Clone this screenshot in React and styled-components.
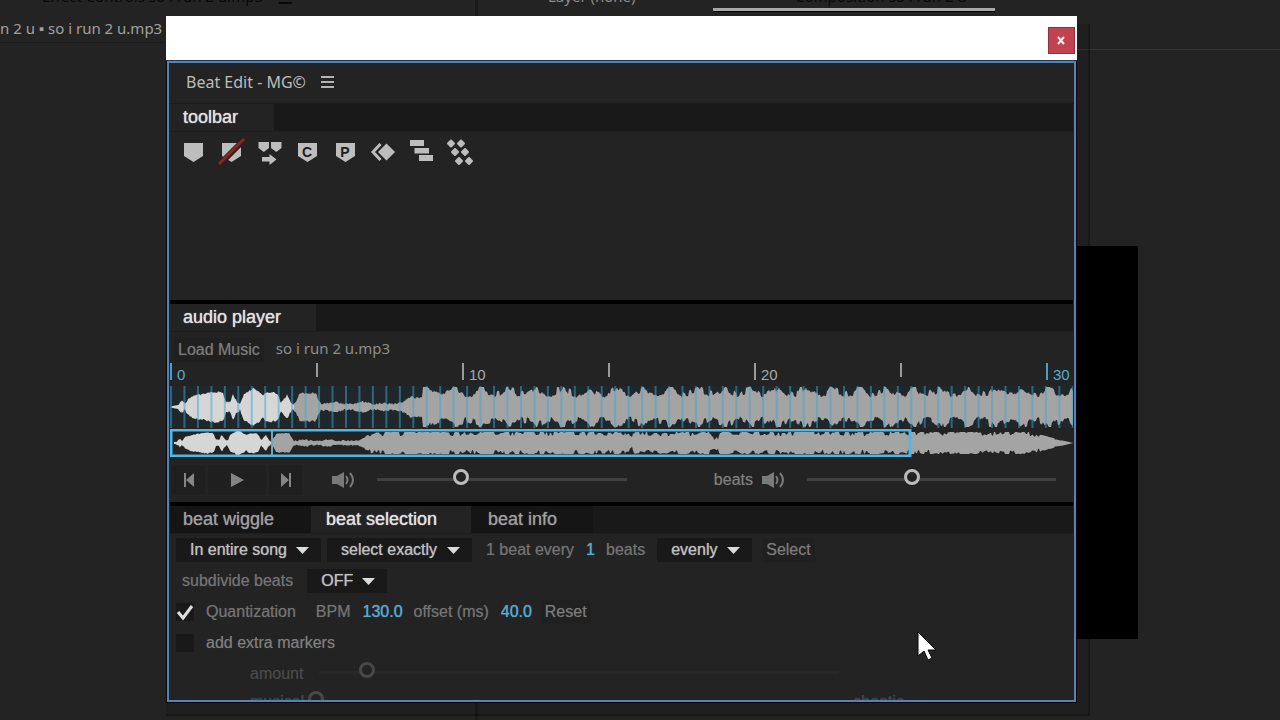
import React from "react";
import styled, { createGlobalStyle, css } from "styled-components";

const sans = `"Liberation Sans", Arial, sans-serif`;
const humanist = `"Noto Sans", "Open Sans", sans-serif`;

const Global = createGlobalStyle`
  * { box-sizing: border-box; }
  body { margin: 0; background: #232323; color: #808080; font: 16px/20px ${sans}; }
  button, input, select { font: inherit; color: inherit; margin: 0; }
`;

/* ---------- host application behind the panel ---------- */

const Desktop = styled.main`
  position: relative;
  min-height: 100vh;
  display: flex;
  flex-direction: column;
  overflow: hidden;
`;

const HostColumns = styled.div`
  flex: 1;
  display: grid;
  grid-template-columns: 478fr 802fr;
`;

const HostPanel = styled.section`
  display: flex;
  flex-direction: column;
  border-right: ${(p) => (p.$divider ? "3px solid #1a1a1a" : "0")};
`;

const HostTabs = styled.div`
  display: flex;
  justify-content: space-between;
  height: 12px;
  overflow: hidden;
  padding: 0 ${(p) => p.$end}px 0 ${(p) => p.$start}px;
  font: 15px/20px ${humanist};
`;

const HostTab = styled.div`
  display: flex;
  align-items: flex-end;
  gap: 16px;
  height: 11px;
  padding: 0 0 5px;
  color: ${(p) => (p.$dim ? "#080808" : "#8c8c8c")};
  white-space: nowrap;
  > svg { margin-bottom: 2px; }
  ${(p) =>
    p.$active &&
    css`
      width: 282px;
      padding: 0 0 2px 82px;
      border-bottom: 3px solid #a8a8a8;
      box-shadow: 0 1px 0 #000;
    `}
`;

const SourcePath = styled.div`
  height: 31px;
  border-bottom: 1px solid #1b1b1b;
  padding-top: 6px;
  font: 15px/20px ${humanist};
  color: #a0a0a0;
  white-space: nowrap;
`;

const MonitorRule = styled.div`
  height: 38px;
  border-bottom: 1px solid #343434;
`;

const Monitor = styled.div`
  width: 65%;
  max-width: 518px;
  aspect-ratio: 518 / 393;
  margin: 196px auto 0;
  background: #000;
`;

/* ---------- floating window ---------- */

const Window = styled.section`
  position: absolute;
  z-index: 1;
  inset: 16px 203px 17px 166px;
  display: flex;
  flex-direction: column;
  background: #05060c;

  &::after {
    content: "";
    position: absolute;
    z-index: -1;
    inset: 8px -13px -13px 0;
    background: rgba(0, 0, 0, 0.1);
    border: solid rgba(0, 0, 0, 0.25);
    border-width: 0 2px 2px 0;
  }
`;

const TitleBar = styled.header`
  flex: none;
  height: 45px;
  display: flex;
  justify-content: flex-end;
  padding: 11px 2px 0;
  background: #fff;
  border-bottom: 1px solid #1f3550;
`;

const CloseButton = styled.button`
  width: 27px;
  height: 27px;
  padding: 0;
  display: grid;
  place-items: center;
  background: #c0434f;
  border: 1px solid #93303f;
`;

const Body = styled.div`
  flex: 1;
  min-height: 0;
  overflow: hidden;
  margin: 0 1px 1px;
  border: 2px solid #5583b4;
  background: #232323;
`;

const PanelHeader = styled.div`
  display: flex;
  align-items: center;
  gap: 15px;
  height: 41px;
  padding: 0 17px 2px;
  border-bottom: 1px solid #1b1b1b;
  font: 16px/20px ${humanist};
  color: #bcbcbc;
`;

const MenuButton = styled.button`
  padding: 0;
  border: 0;
  background: none;
  display: flex;
`;

const Section = styled.section`
  margin: 0 1px;
  border-top: ${(p) => (p.$first ? "0" : "4px solid #000")};
`;

const TabBar = styled.div`
  display: flex;
  height: 28px;
  background: #191919;
  border-bottom: 1px solid #1e1e1e;
`;

const Tab = styled.button`
  width: ${(p) => p.$width}px;
  padding: 0 0 1px ${(p) => p.$indent || 13}px;
  border: 0;
  text-align: left;
  font-size: 18px;
  line-height: 20px;
  background: ${(p) => (p.$active ? "#232323" : "#151515")};
  color: ${(p) => (p.$active ? "#e2e2e2" : "#a0a0a0")};
  text-shadow: 0 0 1px ${(p) => (p.$active ? "#e2e2e2" : "#808080")};
`;

const ToolRow = styled.div`
  display: flex;
  align-items: flex-start;
  gap: 10px;
  height: 168px;
  padding: 6px 10px;
`;

const ToolButton = styled.button`
  width: 28px;
  height: 28px;
  padding: 0;
  border: 0;
  background: none;
  svg { display: block; overflow: visible; }
`;

/* ---------- audio player ---------- */

const LoadRow = styled.div`
  display: flex;
  align-items: center;
  gap: 12px;
  height: 31px;
  padding: 4px 4px 0;
`;

const PlainButton = styled.button`
  padding: 0 4px;
  height: 24px;
  border: 0;
  background: #202020;
  color: #7c7c7c;
  text-shadow: 0 0 1px #505050;
`;

const FileName = styled.span`
  padding-bottom: 4px;
  font: 15px/20px ${humanist};
  color: #8c8c8c;
`;

const Ruler = styled.div`
  display: grid;
  grid-template-columns: repeat(6, minmax(0, 146fr)) minmax(0, 27fr);
  height: 23px;
`;

const RulerCell = styled.div`
  height: ${(p) => (p.$label ? 17 : 14)}px;
  padding: 2px 0 0 5px;
  border-left: 2px solid ${(p) => (p.$accent ? "#4a9fc6" : "#9a9a9a")};
  color: ${(p) => (p.$accent ? "#57acd2" : "#a8a8a8")};
  font-size: 15px;
`;

const WaveView = styled.svg`
  display: block;
  width: 100%;
  height: ${(p) => p.$height}px;
  margin-bottom: 1px;
`;

const Transport = styled.div`
  display: flex;
  align-items: center;
  height: 44px;
  padding: 0 17px 0 2px;
`;

const TransportButton = styled.button`
  width: ${(p) => (p.$wide ? 58 : 33)}px;
  height: 30px;
  margin-right: 3px;
  padding: 0;
  border: 0;
  display: grid;
  place-items: center;
  background: #1f1f1f;
`;

const Volume = styled.label`
  display: flex;
  align-items: center;
  gap: 8px;
  margin-left: ${(p) => (p.$push ? "auto" : "26px")};
`;

const Slider = styled.input.attrs({ type: "range" })`
  appearance: none;
  width: ${(p) => p.$width}px;
  height: 20px;
  margin: 0 0 2px ${(p) => p.$gap}px;
  background: none;
  &::-webkit-slider-runnable-track {
    height: 3px;
    background: ${(p) => (p.$dim ? "#282828" : "#404040")};
  }
  &::-webkit-slider-thumb {
    appearance: none;
    width: 16px;
    height: 16px;
    margin-top: -9px;
    border-radius: 50%;
    border: 3px solid ${(p) => (p.$dim ? "#484848" : "#bcbcbc")};
    background: #232323;
  }
`;

/* ---------- beat selection form ---------- */

const FormRow = styled.div`
  display: flex;
  align-items: center;
  height: ${(p) => (p.$tight ? 26 : 31)}px;
  padding-left: ${(p) => p.$indent || 6}px;
  white-space: nowrap;
`;

const Caption = styled.label`
  margin: 0 ${(p) => p.$after || 0}px 0 ${(p) => p.$before || 0}px;
  color: ${(p) => (p.$dim ? "#4a4a4a" : p.$soft ? "#747474" : "#808080")};
  text-shadow: 0 0 1px ${(p) => (p.$dim ? "#333" : "#505050")};
`;

const FarCaption = styled(Caption)`
  color: #2f4855;
`;

const PickWrap = styled.span`
  display: inline-grid;
  align-items: center;
  margin-right: ${(p) => p.$after || 0}px;
  > * { grid-area: 1 / 1; }
  > svg { justify-self: end; margin-right: 12px; pointer-events: none; }
`;

const PickSelect = styled.select`
  appearance: none;
  height: 24px;
  padding: 1px 34px 0 14px;
  border: 0;
  border-radius: 0;
  background: #191919;
  color: #c0c0c0;
  text-shadow: 0 0 1px #a0a0a0;
`;

const HotNumber = styled.input`
  width: ${(p) => p.$width}px;
  height: 24px;
  padding: 0;
  border: 0;
  background: none;
  color: #58a9cb;
  text-shadow: 0 0 1px #58a9cb;
`;

const Check = styled.input.attrs({ type: "checkbox" })`
  appearance: none;
  width: 18px;
  height: 18px;
  background: #191919;
`;

const CheckWrap = styled.span`
  display: inline-grid;
  margin-right: 12px;
  > * { grid-area: 1 / 1; }
  > svg { pointer-events: none; }
`;

const Pointer = styled.svg`
  position: absolute;
  z-index: 2;
  left: 916px;
  top: 630px;
`;

/* ---------- drawing data ---------- */

const SPAN = 903;

const intro = [
  [0, 0], [3, 1], [8, 2], [12, 6], [15, 3], [19, 9], [26, 12], [34, 13], [40, 15], [46, 15],
  [53, 14], [56, 5], [60, 5], [63, 13], [66, 7], [70, 3], [74, 13], [78, 15], [83, 19], [90, 14],
  [93, 11], [97, 15], [106, 14], [108, 12], [111, 4], [117, 12], [120, 6], [123, 2], [126, 6], [130, 14],
  [146, 14], [148, 8], [151, 3], [158, 4], [166, 5], [174, 3], [183, 3], [190, 5], [196, 5], [201, 3],
  [209, 3], [214, 4], [220, 3], [231, 4], [236, 7], [241, 11], [245, 9], [253, 10],
];

const noise = (n) => {
  const v = Math.sin(n * 127.1 + 11.7) * 43758.5453;
  return v - Math.floor(v);
};

function level(x, side) {
  if (x < 253) {
    let i = 1;
    while (i < intro.length - 1 && intro[i][0] < x) i += 1;
    const [x0, a0] = intro[i - 1];
    const [x1, a1] = intro[i];
    const base = a0 + ((x - x0) / (x1 - x0)) * (a1 - a0);
    return Math.max(0, base + (base > 2 ? (noise(x + side * 500) - 0.5) * 2 : 0));
  }
  const phase = ((x - 258) % 27) / 27;
  const near = Math.min(phase, 1 - phase) * 2;
  const swell = Math.pow(1 - near, 2) * 8;
  const spike = Math.pow(noise(Math.floor(x / 3) + side * 900), 2) * 7;
  return Math.min(20, 9 + swell + spike + noise(x) * 2);
}

function outline(from, to, mid, fn, step = 1) {
  const upper = [];
  const lower = [];
  for (let x = from; x <= to; x += step) {
    upper.push(`${x},${(mid - fn(x, 0)).toFixed(1)}`);
    lower.unshift(`${x},${(mid + fn(x, 1)).toFixed(1)}`);
  }
  return [...upper, ...lower].join(" ");
}

const overview = (x, side) => {
  const source = x / 0.82;
  const fade = x > 860 ? Math.max(0, (SPAN - x) / 43) : 1;
  if (source < 245) return level(source, side) * 0.68;
  const dip = Math.abs(x - 459) < 4 || Math.abs(x - 545) < 4 ? 4 : 0;
  const block = noise(Math.floor(x / 5) + 40) > 0.5 ? 3 : 0;
  return Math.min(11, 7 + block + noise(Math.floor(x / 2) + side * 300) * 4 - dip) * fade;
};

const beats = Array.from({ length: 68 }, (_, i) => 1 + i * 13.46);

/* ---------- icons ---------- */

const Marker = () => <path d="M4 5h19v13l-9.500 6L4 18z" fill="#bdbdbd" />;

const LetterMarker = ({ letter }) => (
  <>
    <Marker />
    <text x="13" y="19" textAnchor="middle" fontFamily="Liberation Sans, sans-serif" fontWeight="700" fontSize="14" fill="#1b1b1b">
      {letter}
    </text>
  </>
);

const gem = (x, y) => `M${x} ${y - 3}l3 3-3 3-3-3z`;

const tools = [
  { name: "Add markers", art: <Marker /> },
  {
    name: "Remove markers",
    art: (
      <>
        <Marker />
        <path d="M1 27L26 2" stroke="#232323" strokeWidth="6" />
        <path d="M1 26L26 1" stroke="#8f2419" strokeWidth="3" />
      </>
    ),
  },
  {
    name: "Move markers",
    art: (
      <path
        d="M2.500 4H13v6l-5.200 4-5.300-4zM15 4h10.500v6l-5.200 4-5.300-4zM6 19h7.500v-3l7 5.500-7 5.500v-3.500H6z"
        fill="#bdbdbd"
      />
    ),
  },
  { name: "Composition markers", art: <LetterMarker letter="C" /> },
  { name: "Project markers", art: <LetterMarker letter="P" /> },
  {
    name: "Keyframes",
    art: (
      <>
        <path d="M10.500 6L3 14l7.500 8" fill="none" stroke="#bdbdbd" strokeWidth="3" />
        <path d="M16.500 5.500L25 14l-8.500 8.500L8 14z" fill="#bdbdbd" />
      </>
    ),
  },
  { name: "Sequence layers", art: <path d="M2 2h14v6H2zM6.500 10h14.500v5.500H6.500zM11 17h14v6H11z" fill="#bdbdbd" /> },
  {
    name: "Scatter layers",
    art: (
      <path
        d={[gem(5, 5.5), gem(15, 5.5), gem(9, 14), gem(19, 14), gem(13, 23), gem(23, 23)].join("")}
        fill="#bdbdbd"
        stroke="#bdbdbd"
        strokeWidth="2"
        strokeLinejoin="round"
      />
    ),
  },
];

const Speaker = () => (
  <svg width="24" height="20" viewBox="0 0 24 20" aria-hidden="true">
    <path d="M1 6h5l7-4v16l-7-4H1z" fill="#7a7a7a" />
    <path d="M15 6q3 4 0 8M19 3q6 7 0 14" fill="none" stroke="#7a7a7a" strokeWidth="2" />
  </svg>
);

const Pick = ({ label, value, after }) => (
  <PickWrap $after={after}>
    <PickSelect aria-label={label} defaultValue={value}>
      <option>{value}</option>
    </PickSelect>
    <svg width="13" height="8" viewBox="0 0 13 8" aria-hidden="true">
      <path d="M0 1h13L6.500 8z" fill="#dcdcdc" />
    </svg>
  </PickWrap>
);

const Bars = ({ color = "#b4b4b4" }) => (
  <svg width="13" height="12" viewBox="0 0 13 12" aria-hidden="true">
    <path d="M0 1h13M0 6h13M0 11h13" stroke={color} strokeWidth="2" />
  </svg>
);

export default function App() {
  return (
    <Desktop>
      <Global />
      <HostColumns>
        <HostPanel $divider>
          <HostTabs $start={42} $end={180}>
            <HostTab $dim>
              Effect Controls so i run 2 u.mp3
              <Bars color="#080808" />
            </HostTab>
          </HostTabs>
          <SourcePath>n 2 u ▪ so i run 2 u.mp3</SourcePath>
        </HostPanel>
        <HostPanel>
          <HostTabs $start={70} $end={285}>
            <HostTab>Layer (none)</HostTab>
            <HostTab $active $dim>
              Composition so i run 2 u
            </HostTab>
          </HostTabs>
          <MonitorRule />
          <Monitor />
        </HostPanel>
      </HostColumns>

      <Window aria-label="Beat Edit">
        <TitleBar>
          <CloseButton aria-label="Close">
            <svg width="9" height="9" viewBox="0 0 9 9" aria-hidden="true">
              <path d="M1 1l6 7M7 1L1 8" stroke="#fbeef0" strokeWidth="2" />
            </svg>
          </CloseButton>
        </TitleBar>
        <Body>
          <PanelHeader>
            Beat Edit - MG©
            <MenuButton aria-label="Panel menu">
              <Bars />
            </MenuButton>
          </PanelHeader>

          <Section $first>
            <TabBar>
              <Tab $active $width={104}>toolbar</Tab>
            </TabBar>
            <ToolRow>
              {tools.map((t) => (
                <ToolButton key={t.name} aria-label={t.name}>
                  <svg width="28" height="28" viewBox="0 0 28 28">{t.art}</svg>
                </ToolButton>
              ))}
            </ToolRow>
          </Section>

          <Section>
            <TabBar>
              <Tab $active $width={146}>audio player</Tab>
            </TabBar>
            <LoadRow>
              <PlainButton>Load Music</PlainButton>
              <FileName>so i run 2 u.mp3</FileName>
            </LoadRow>
            <Ruler>
              <RulerCell $label $accent>0</RulerCell>
              <RulerCell />
              <RulerCell $label>10</RulerCell>
              <RulerCell />
              <RulerCell $label>20</RulerCell>
              <RulerCell />
              <RulerCell $label $accent>30</RulerCell>
            </Ruler>
            <WaveView $height={42} viewBox={`0 0 ${SPAN} 42`} preserveAspectRatio="none" aria-label="Waveform">
              <rect width={SPAN} height="42" fill="#20272a" />
              <polygon points={outline(0, 124, 21, level)} fill="#d6d6d6" />
              <polygon points={outline(124, SPAN, 21, level)} fill="#a4a4a4" />
              {beats.map((x) => (
                <rect key={x} x={x - 1} y="0" width="2" height="42" fill="#3fa6cf" opacity="0.5" />
              ))}
            </WaveView>
            <WaveView $height={28} viewBox={`0 0 ${SPAN} 28`} preserveAspectRatio="none" aria-label="Overview">
              <polygon points={outline(4, 102, 14, overview)} fill="#d6d6d6" />
              <polygon points={outline(102, SPAN, 14, overview)} fill="#a4a4a4" />
              <rect x="101" y="2" width="2" height="24" fill="#6fa6bd" />
              <rect x="1" y="1" width="739" height="26" fill="none" stroke="#4fb8e4" strokeWidth="3" />
            </WaveView>
            <Transport>
              <TransportButton aria-label="Previous">
                <svg width="12" height="14" viewBox="0 0 12 14">
                  <path d="M1 0h2v14H1zM11 0v14L3 7z" fill="#858585" />
                </svg>
              </TransportButton>
              <TransportButton $wide aria-label="Play">
                <svg width="14" height="16" viewBox="0 0 14 16">
                  <path d="M1 1l13 7-13 7z" fill="#858585" />
                </svg>
              </TransportButton>
              <TransportButton aria-label="Next">
                <svg width="12" height="14" viewBox="0 0 12 14">
                  <path d="M9 0h2v14H9zM1 0v14l8-7z" fill="#858585" />
                </svg>
              </TransportButton>
              <Volume>
                <Speaker />
                <Slider $width={250} $gap={14} aria-label="Music volume" min="0" max="1000" defaultValue="325" />
              </Volume>
              <Volume $push>
                <Caption as="span">beats</Caption>
                <Speaker />
                <Slider $width={249} $gap={14} aria-label="Beats volume" min="0" max="1000" defaultValue="416" />
              </Volume>
            </Transport>
          </Section>

          <Section>
            <TabBar>
              <Tab $width={141}>beat wiggle</Tab>
              <Tab $active $width={160} $indent={15}>beat selection</Tab>
              <Tab $width={122} $indent={17}>beat info</Tab>
            </TabBar>
            <FormRow>
              <Pick label="Range" value="In entire song" after={6} />
              <Pick label="Mode" value="select exactly" after={14} />
              <Caption htmlFor="every" $after={12} $soft>1 beat every</Caption>
              <HotNumber id="every" $width={20} defaultValue="1" />
              <Caption as="span" $after={12} $soft>beats</Caption>
              <Pick label="Distribution" value="evenly" after={10} />
              <PlainButton>Select</PlainButton>
            </FormRow>
            <FormRow $indent={12}>
              <Caption as="span" $after={14} $soft>subdivide beats</Caption>
              <Pick label="subdivide beats" value="OFF" />
            </FormRow>
            <FormRow>
              <CheckWrap>
                <Check id="quant" defaultChecked />
                <svg width="18" height="18" viewBox="0 0 18 18" aria-hidden="true">
                  <path d="M2 9l5 6L16 3" fill="none" stroke="#dedede" strokeWidth="3" />
                </svg>
              </CheckWrap>
              <Caption htmlFor="quant" $after={20} $soft>Quantization</Caption>
              <Caption htmlFor="bpm" $after={12} $soft>BPM</Caption>
              <HotNumber id="bpm" $width={51} defaultValue="130.0" />
              <Caption htmlFor="offset" $after={12} $soft>offset (ms)</Caption>
              <HotNumber id="offset" $width={40} defaultValue="40.0" />
              <PlainButton>Reset</PlainButton>
            </FormRow>
            <FormRow>
              <CheckWrap>
                <Check id="extra" />
              </CheckWrap>
              <Caption htmlFor="extra">add extra markers</Caption>
            </FormRow>
            <FormRow $indent={80}>
              <Caption htmlFor="amount" $dim>amount</Caption>
              <Slider id="amount" $dim $width={520} $gap={16} min="0" max="1000" defaultValue="78" />
            </FormRow>
            <FormRow $indent={80} $tight>
              <FarCaption htmlFor="musical">musical</FarCaption>
              <Slider id="musical" $dim $width={533} $gap={4} min="0" max="1000" defaultValue="0" />
              <FarCaption as="span" $before={12}>chaotic</FarCaption>
            </FormRow>
          </Section>
        </Body>
      </Window>

      <Pointer width="22" height="32" viewBox="0 0 22 32" aria-hidden="true">
        <path d="M2 2v24l6-5 4 9 4-2-4-8h8z" fill="#fff" stroke="#0a0a0a" strokeWidth="1" />
      </Pointer>
    </Desktop>
  );
}
